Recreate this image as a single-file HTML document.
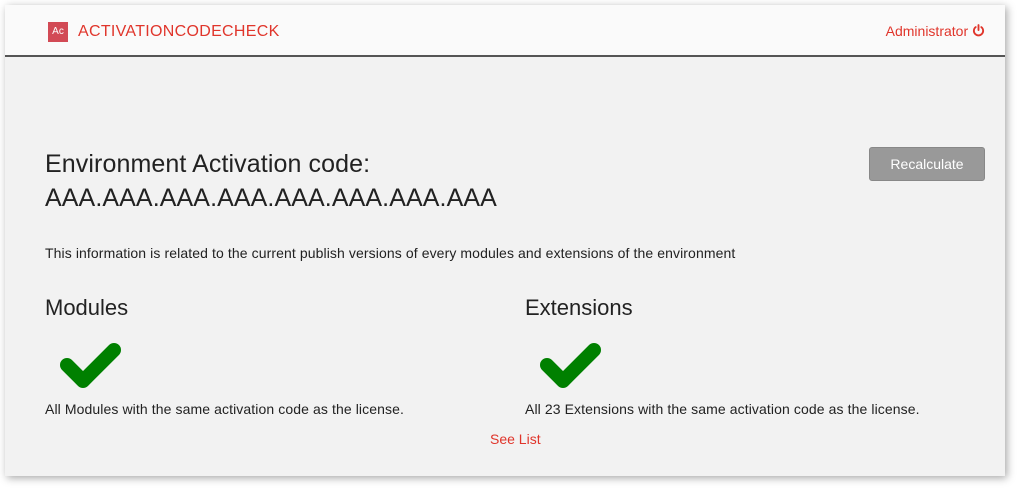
<!DOCTYPE html>
<html><head><meta charset="utf-8"><style>
html,body{margin:0;padding:0;width:1020px;height:491px;background:#fff;overflow:hidden;font-family:"Liberation Sans",sans-serif;}
.card{position:absolute;left:5px;top:5px;width:1000px;height:471px;background:#f2f2f2;box-shadow:2px 2px 8px rgba(0,0,0,0.35);}
.hdr{position:absolute;left:0;top:0;width:1000px;height:50px;background:#fafafa;border-bottom:2px solid #555;}
.logo{position:absolute;left:43px;top:17px;width:20px;height:20px;background:#d24a55;color:#fff;font-size:10px;line-height:20px;text-align:center;}
.title{position:absolute;left:73px;top:17px;font-size:16px;letter-spacing:0.3px;color:#e0352b;line-height:20px;}
.admin{position:absolute;right:20px;top:16px;font-size:14px;color:#e0352b;line-height:20px;}
.t{position:absolute;color:#222;}
.btn{position:absolute;left:864px;top:142px;width:114px;height:32px;background:#999;border:1px solid #888;border-radius:3px;color:#fff;font-size:14px;line-height:32px;text-align:center;}
</style></head><body>
<div class="card">
<div class="hdr">
<div class="logo">Ac</div>
<div class="title">ACTIVATIONCODECHECK</div>
<div class="admin">Administrator <svg width="13" height="13" viewBox="0 0 14 14" style="vertical-align:-1px"><path d="M4 3.3A5 5 0 1 0 10 3.3" fill="none" stroke="#e0352b" stroke-width="2" stroke-linecap="round"/><path d="M7 1.2V6.5" stroke="#e0352b" stroke-width="2" stroke-linecap="round"/></svg></div>
</div>
<div class="t" style="left:40px;top:142px;font-size:25px;line-height:34px;letter-spacing:0.1px;">Environment Activation code:<br>AAA.AAA.AAA.AAA.AAA.AAA.AAA.AAA</div>
<div class="btn">Recalculate</div>
<div class="t" style="left:40px;top:240px;font-size:14px;letter-spacing:0.1px;">This information is related to the current publish versions of every modules and extensions of the environment</div>
<div class="t" style="left:40px;top:290px;font-size:22px;">Modules</div>
<div class="t" style="left:520px;top:290px;font-size:22px;">Extensions</div>
<svg style="position:absolute;left:0;top:0" width="1000" height="471"><polyline points="62,360 78,376 109,345" fill="none" stroke="#008000" stroke-width="14" stroke-linejoin="round" stroke-linecap="round"/><polyline points="542,360 558,376 589,345" fill="none" stroke="#008000" stroke-width="14" stroke-linejoin="round" stroke-linecap="round"/></svg>
<div class="t" style="left:40px;top:396px;font-size:14px;letter-spacing:0.1px;">All Modules with the same activation code as the license.</div>
<div class="t" style="left:520px;top:396px;font-size:14px;letter-spacing:0.1px;">All 23 Extensions with the same activation code as the license.</div>
<div class="t" style="left:485px;top:426px;font-size:14px;color:#e0352b;">See List</div>
</div>
</body></html>
